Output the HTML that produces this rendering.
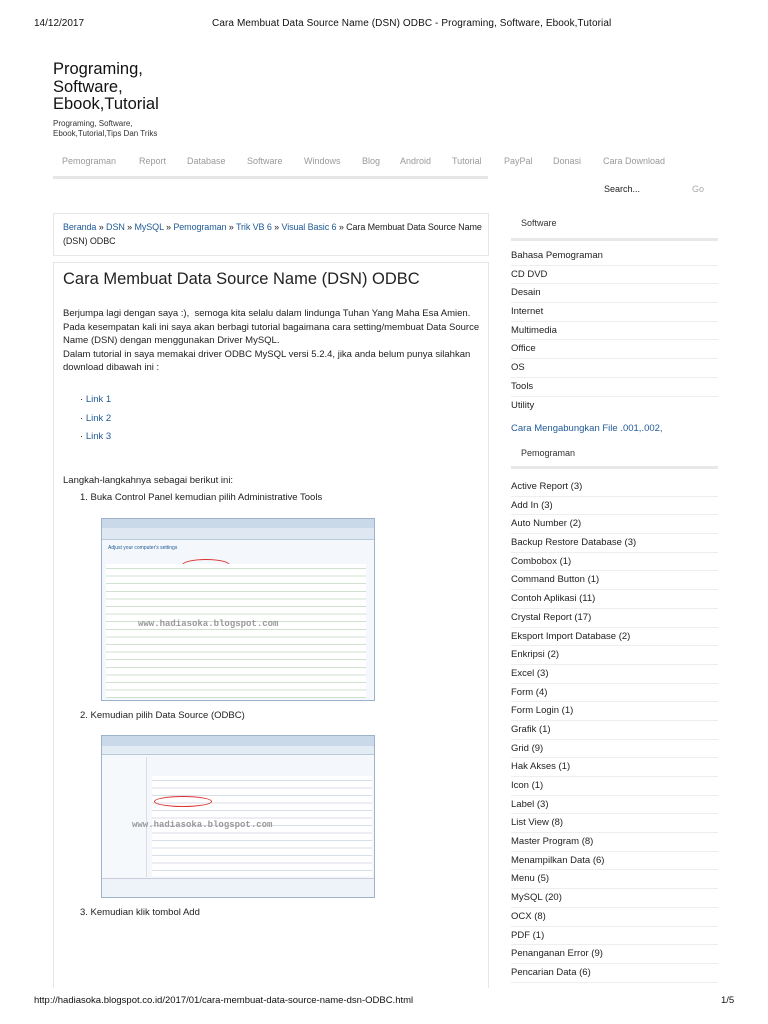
<!DOCTYPE html>
<html><head><meta charset="utf-8"><style>
*{margin:0;padding:0;box-sizing:border-box}
html,body{width:768px;height:1024px;overflow:hidden}
body{background:#fff;font-family:"Liberation Sans",sans-serif;color:#222;position:relative}
.a{position:absolute;white-space:nowrap}
.hd{font-size:10px;color:#111}
.nav span{position:absolute;font-size:9px;color:#999;top:156px}
.box{position:absolute;border:1px solid #e6e6e6}
.txt{font-size:9.5px;line-height:13.5px;color:#222}
a,.lk{color:#1f5a96;text-decoration:none}
.sb{position:absolute;left:511px;width:207px}
.sb div{font-size:9.5px;height:18.7px;line-height:17px;border-bottom:1px solid #eee;color:#222}
.shd{position:absolute;left:511px;width:207px;font-size:9px;color:#333;padding-left:10px;border-bottom:3px solid #e8e8e8}
.shot{position:absolute;background:#f4f7fb;border:1px solid #9db3cc;overflow:hidden}
</style></head><body>
<div class="a hd" style="left:34px;top:18px">14/12/2017</div>
<div class="a hd" style="left:212px;top:18px;letter-spacing:0.1px">Cara Membuat Data Source Name (DSN) ODBC - Programing, Software, Ebook,Tutorial</div>

<div class="a" style="left:53px;top:61px;font-size:16.5px;line-height:17.5px;color:#111">Programing,<br>Software,<br>Ebook,Tutorial</div>
<div class="a" style="left:53px;top:119px;font-size:8px;line-height:9.5px;color:#333">Programing, Software,<br>Ebook,Tutorial,Tips Dan Triks</div>

<div class="nav">
<span style="left:62px">Pemograman</span><span style="left:139px">Report</span><span style="left:187px">Database</span><span style="left:247px">Software</span><span style="left:304px">Windows</span><span style="left:362px">Blog</span><span style="left:400px">Android</span><span style="left:452px">Tutorial</span><span style="left:504px">PayPal</span><span style="left:553px">Donasi</span><span style="left:603px">Cara Download</span>
</div>
<div class="a" style="left:53px;top:176px;width:435px;height:3px;background:#e6e6e6"></div>
<div class="a" style="left:604px;top:184px;font-size:9px;color:#222">Search...</div>
<div class="a" style="left:692px;top:184px;font-size:9px;color:#aaa">Go</div>

<div class="box" style="left:53px;top:213px;width:436px;height:43px"></div>
<div class="a txt" style="left:63px;top:221px;font-size:9px;letter-spacing:-0.1px"><span class="lk">Beranda</span> » <span class="lk">DSN</span> » <span class="lk">MySQL</span> » <span class="lk">Pemograman</span> » <span class="lk">Trik VB 6</span> » <span class="lk">Visual Basic 6</span> » Cara Membuat Data Source Name<br>(DSN) ODBC</div>

<div class="box" style="left:53px;top:262px;width:436px;height:740px"></div>
<div class="a" style="left:63px;top:270px;font-size:16.5px;color:#222">Cara Membuat Data Source Name (DSN) ODBC</div>
<div class="a txt" style="left:63px;top:307px">Berjumpa lagi dengan saya :),&nbsp; semoga kita selalu dalam lindunga Tuhan Yang Maha Esa Amien.<br>Pada kesempatan kali ini saya akan berbagi tutorial bagaimana cara setting/membuat Data Source<br>Name (DSN) dengan menggunakan Driver MySQL.<br>Dalam tutorial in saya memakai driver ODBC MySQL versi 5.2.4, jika anda belum punya silahkan<br>download dibawah ini :</div>
<div class="a txt" style="left:80px;top:391px;line-height:18.5px">· <span class="lk">Link 1</span><br>· <span class="lk">Link 2</span><br>· <span class="lk">Link 3</span></div>
<div class="a txt" style="left:63px;top:474px">Langkah-langkahnya sebagai berikut ini:</div>
<div class="a txt" style="left:80px;top:491px">1. Buka Control Panel kemudian pilih Administrative Tools</div>

<div class="shot" style="left:101px;top:518px;width:274px;height:183px">
<div style="height:9px;background:#c9d9ea"></div>
<div style="height:12px;background:#dfe8f2;border-bottom:1px solid #b9c9da"></div>
<div style="position:absolute;left:6px;top:26px;font-size:5px;color:#1f5a96">Adjust your computer's settings</div>
<div style="position:absolute;left:80px;top:40px;width:48px;height:12px;border:1px solid #d33;border-radius:50%"></div>
<div style="position:absolute;left:4px;top:45px;width:260px;height:134px;background:repeating-linear-gradient(#fff 0 4px,#cfe0cf 4px 5px,#fff 5px 7.6px)"></div>
<div style="position:absolute;left:36px;top:100px;font-size:9px;font-weight:bold;color:#999;font-family:'Liberation Mono',monospace">www.hadiasoka.blogspot.com</div>
</div>

<div class="a txt" style="left:80px;top:709px">2. Kemudian pilih Data Source (ODBC)</div>

<div class="shot" style="left:101px;top:735px;width:274px;height:163px">
<div style="height:10px;background:#c9d9ea"></div>
<div style="height:9px;background:#e3ebf4;border-bottom:1px solid #b9c9da"></div>
<div style="position:absolute;left:0;top:21px;width:45px;height:120px;background:#f6f9fc;border-right:1px solid #ddd"></div>
<div style="position:absolute;left:50px;top:40px;width:220px;height:100px;background:repeating-linear-gradient(#fff 0 4px,#d8dee8 4px 5px,#fff 5px 7.5px)"></div>
<div style="position:absolute;left:52px;top:60px;width:58px;height:11px;border:1px solid #d33;border-radius:50%"></div>
<div style="position:absolute;left:30px;top:84px;font-size:9px;font-weight:bold;color:#999;font-family:'Liberation Mono',monospace">www.hadiasoka.blogspot.com</div>
<div style="position:absolute;left:0;top:142px;width:272px;height:20px;background:#eef3f9;border-top:1px solid #ccd"></div>
</div>

<div class="a txt" style="left:80px;top:906px">3. Kemudian klik tombol Add</div>

<div class="shd" style="top:218px;height:23px">Software</div>
<div class="sb" style="top:247px">
<div>Bahasa Pemograman</div><div>CD DVD</div><div>Desain</div><div>Internet</div><div>Multimedia</div><div>Office</div><div>OS</div><div>Tools</div><div style="border:none">Utility</div>
</div>
<div class="a lk" style="left:511px;top:423px;font-size:9.5px">Cara Mengabungkan File .001,.002,</div>
<div class="shd" style="top:448px;height:21px">Pemograman</div>
<div class="sb" style="top:478px">
<div>Active Report (3)</div><div>Add In (3)</div><div>Auto Number (2)</div><div>Backup Restore Database (3)</div><div>Combobox (1)</div><div>Command Button (1)</div><div>Contoh Aplikasi (11)</div><div>Crystal Report (17)</div><div>Eksport Import Database (2)</div><div>Enkripsi (2)</div><div>Excel (3)</div><div>Form (4)</div><div>Form Login (1)</div><div>Grafik (1)</div><div>Grid (9)</div><div>Hak Akses (1)</div><div>Icon (1)</div><div>Label (3)</div><div>List View (8)</div><div>Master Program (8)</div><div>Menampilkan Data (6)</div><div>Menu (5)</div><div>MySQL (20)</div><div>OCX (8)</div><div>PDF (1)</div><div>Penanganan Error (9)</div><div>Pencarian Data (6)</div>
</div>

<div class="a" style="left:0;top:988px;width:768px;height:36px;background:#fff"></div>
<div class="a hd" style="left:34px;top:995px;font-size:9.5px">http://hadiasoka.blogspot.co.id/2017/01/cara-membuat-data-source-name-dsn-ODBC.html</div>
<div class="a hd" style="left:721px;top:995px;font-size:9.5px">1/5</div>
</body></html>
